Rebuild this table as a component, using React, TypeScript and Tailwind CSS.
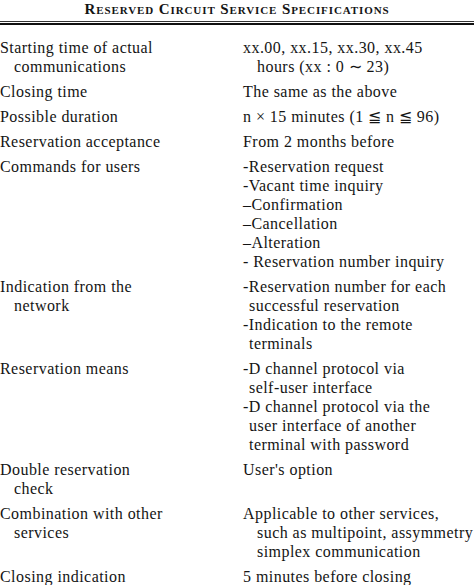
import React from "react";

type Row = {
  label: string[];
  value: { text: string; indent?: number }[];
};

const rows: Row[] = [
  {
    label: ["Starting time of actual", "communications"],
    value: [{ text: "xx.00, xx.15, xx.30, xx.45" }, { text: "hours (xx : 0 ∼ 23)", indent: 14 }],
  },
  { label: ["Closing time"], value: [{ text: "The same as the above" }] },
  { label: ["Possible duration"], value: [{ text: "n × 15 minutes (1 ≦ n ≦ 96)" }] },
  { label: ["Reservation acceptance"], value: [{ text: "From 2 months before" }] },
  {
    label: ["Commands for users"],
    value: [
      { text: "-Reservation request" },
      { text: "-Vacant time inquiry" },
      { text: "–Confirmation" },
      { text: "–Cancellation" },
      { text: "–Alteration" },
      { text: "- Reservation number inquiry" },
    ],
  },
  {
    label: ["Indication from the", "network"],
    value: [
      { text: "-Reservation number for each" },
      { text: "successful reservation", indent: 6 },
      { text: "-Indication to the remote" },
      { text: "terminals", indent: 6 },
    ],
  },
  {
    label: ["Reservation means"],
    value: [
      { text: "-D channel protocol via" },
      { text: "self-user interface", indent: 6 },
      { text: "-D channel protocol via the" },
      { text: "user interface of another", indent: 6 },
      { text: "terminal with password", indent: 6 },
    ],
  },
  { label: ["Double reservation", "check"], value: [{ text: "User's option" }] },
  {
    label: ["Combination with other", "services"],
    value: [
      { text: "Applicable to other services," },
      { text: "such as multipoint, assymmetry", indent: 14 },
      { text: "simplex communication", indent: 14 },
    ],
  },
  { label: ["Closing indication"], value: [{ text: "5 minutes before closing" }] },
];

const indentClass: Record<number, string> = {
  0: "",
  6: "pl-[6px]",
  14: "pl-[14px]",
};

export default function App() {
  return (
    <div
      className="w-[474px] h-[585px] overflow-hidden bg-white text-[#141414]"
      style={{ fontFamily: '"Liberation Serif", "Times New Roman", serif' }}
    >
      <div className="h-[19px] flex items-center justify-center">
        <h1 className="text-[15px] font-bold tracking-[0.9px] [font-variant:small-caps] leading-none">
          Reserved Circuit Service Specifications
        </h1>
      </div>
      <div className="mt-[2px] border-t-[1px] border-[#333]" />
      <div className="mt-[1px] border-t-[2px] border-[#111]" />
      <div className="pt-[13px] flex flex-col gap-[6px] text-[16px] leading-[19px] tracking-[0.45px]">
        {rows.map((row, i) => (
          <div key={i} className="grid grid-cols-[243px_1fr]">
            <div className="flex flex-col">
              {row.label.map((l, j) => (
                <span key={j} className={`whitespace-nowrap ${j > 0 ? "pl-[14px]" : ""}`}>
                  {l}
                </span>
              ))}
            </div>
            <div className="flex flex-col">
              {row.value.map((v, j) => (
                <span key={j} className={`whitespace-nowrap ${indentClass[v.indent ?? 0]}`}>
                  {v.text}
                </span>
              ))}
            </div>
          </div>
        ))}
      </div>
    </div>
  );
}
